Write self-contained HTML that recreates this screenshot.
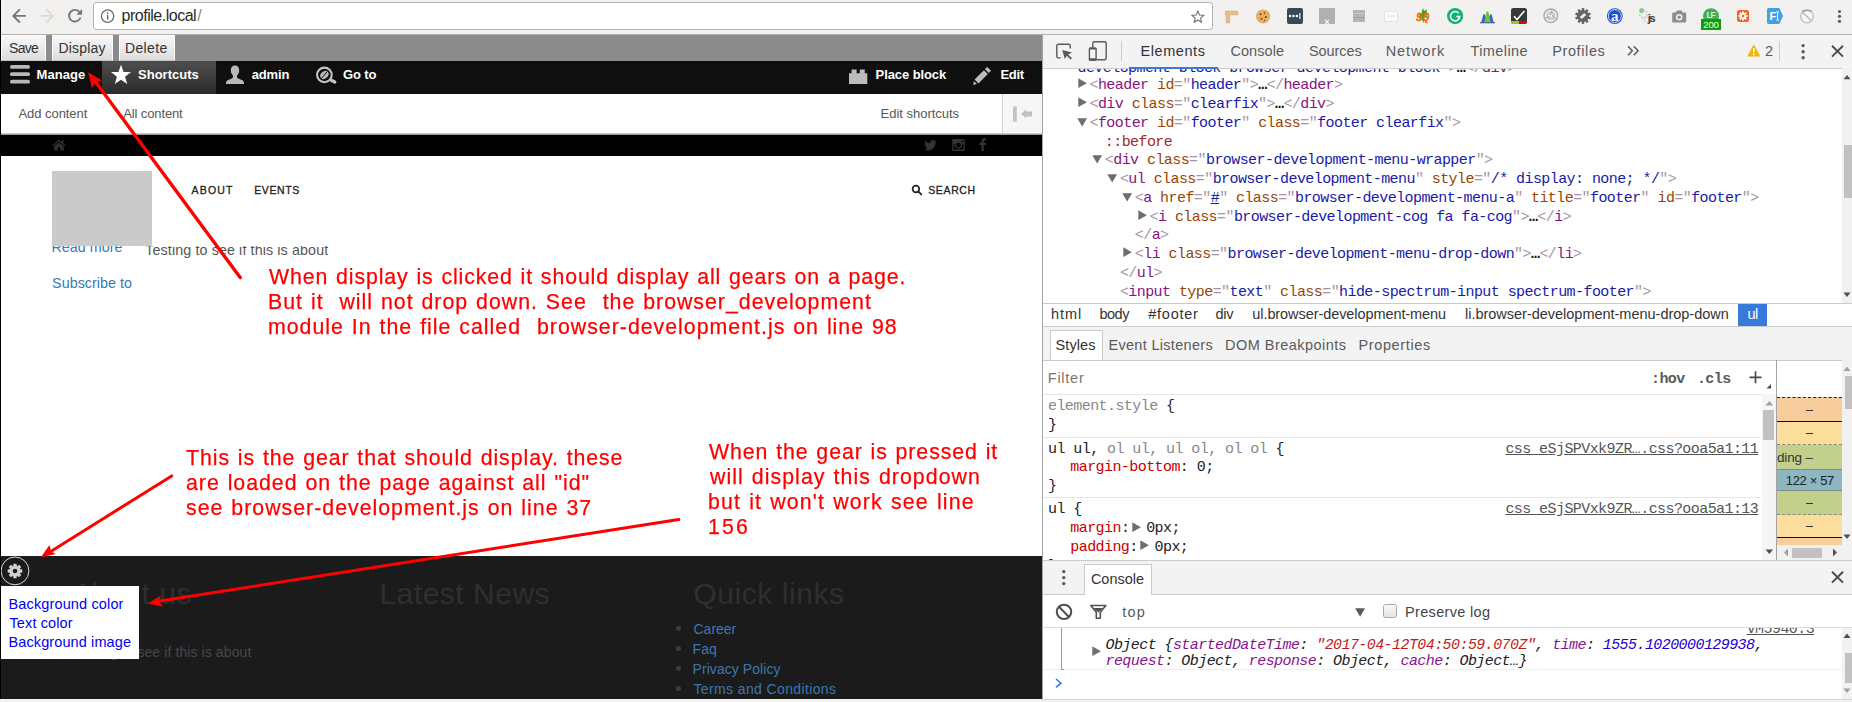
<!DOCTYPE html>
<html><head><meta charset="utf-8"><title>profile.local</title><style>
*{box-sizing:border-box;margin:0;padding:0}
html,body{width:1852px;height:702px;overflow:hidden;background:#f2f1f0;font-family:"Liberation Sans",sans-serif}
.t{position:absolute;white-space:pre;font-family:"Liberation Sans",sans-serif}
.a{position:absolute}
.m{position:absolute;white-space:pre;font-family:"Liberation Mono",monospace;font-size:15px;line-height:19px;letter-spacing:-0.574px}
.tg{color:#881280}.an{color:#994500}.av{color:#1a1aa6}.pu{color:#a894a6}
svg{position:absolute;overflow:visible}
</style></head><body>
<div class="a" style="left:0px;top:0px;width:1852px;height:35px;background:#f2f1f0;"></div>
<div class="a" style="left:0px;top:34px;width:1852px;height:1px;background:#b3b2b0;"></div>
<svg style="left:0;top:0" width="100" height="35"><g fill="none" stroke-linecap="butt" stroke-linejoin="miter"><path d="M25.900 15.900H13.600M19.900 9.300L13.300 15.900L19.900 22.500" stroke="#767676" stroke-width="1.900"/><path d="M40 15.900H52.500M46.200 9.300L52.800 15.900L46.200 22.500" stroke="#dcdbd9" stroke-width="1.900"/><path d="M79.700 12.300A5.850 5.850 0 1 0 80.500 17.500" stroke="#767676" stroke-width="1.900"/><path d="M82.100 9.100V14.700H76.300Z" fill="#767676" stroke="none"/></g></svg>
<div class="a" style="left:93px;top:2px;width:1120px;height:28px;background:#fff;border:1px solid #b3b1ae;border-radius:3.500px"></div>
<svg style="left:100px;top:8px" width="16" height="16"><circle cx="7.6" cy="8.1" r="6.2" fill="none" stroke="#6a6a6a" stroke-width="1.3"/><rect x="6.9" y="7" width="1.5" height="4.6" fill="#6a6a6a"/><rect x="6.9" y="4.4" width="1.5" height="1.6" fill="#6a6a6a"/></svg>
<svg style="left:1191.2px;top:9.9px" width="13.8" height="13.4" viewBox="0 0 16 16"><path d="M8 1.3l2 4.6 5 .45-3.8 3.3 1.15 4.9L8 11.9l-4.35 2.65 1.15-4.9L1 6.35l5-.45z" fill="none" stroke="#6a6a6a" stroke-width="1.25" stroke-linejoin="miter"/></svg>
<svg style="left:1224px;top:9px" width="16" height="16"><path d="M1.5 2.2h12.3v3.5H5.6v8H2.2V5.7H1.5z" fill="#e9bb8d" stroke="#d29c66" stroke-width=".6"/><path d="M2.2 2.6l1.4-1.2v1.2z" fill="#d29c66"/></svg>
<svg style="left:1255px;top:9px" width="16" height="16"><circle cx="8.1" cy="7.4" r="7" fill="#e3a455"/><circle cx="8.1" cy="7.4" r="6.6" fill="#e8ae62"/><g fill="#5b3a1c"><circle cx="5.5" cy="5.2" r=".9"/><circle cx="9.6" cy="4" r=".8"/><circle cx="10.8" cy="8" r=".9"/><circle cx="6.5" cy="9.8" r=".9"/><circle cx="9.5" cy="11.4" r=".7"/></g></svg>
<div class="a" style="left:1287px;top:8px;width:16px;height:16px;background:#3a4a55;border-radius:2px"></div>
<svg style="left:1287px;top:8px" width="16" height="16"><g fill="#fff"><circle cx="3.1" cy="8" r="1.25"/><circle cx="6.5" cy="8" r="1.25"/><circle cx="9.9" cy="8" r="1.25"/><rect x="12.3" y="5" width="1.1" height="6"/></g></svg>
<div class="a" style="left:1319px;top:8px;width:16px;height:16px;background:#b1b1b1"></div>
<svg style="left:1319px;top:8px" width="16" height="16"><path d="M6.2 11.8l3.6 4M9.8 11.8l-3.6 4" stroke="#fff" stroke-width="1.1"/></svg>
<div class="a" style="left:1353px;top:10px;width:12px;height:12px;background:#b4b4b4"></div>
<div class="a" style="left:1354px;top:13px;width:10px;height:1px;background:#c9c9c9"></div><div class="a" style="left:1354px;top:17px;width:10px;height:1px;background:#9f9f9f"></div>
<div class="a" style="left:1384px;top:10.5px;width:14px;height:11px;background:#fcfcfc;border:1px solid #e4e4e4;border-radius:1px"></div>
<div class="a" style="left:1387px;top:15px;width:8px;height:2px;background:#ececec"></div>
<svg style="left:1415px;top:7px" width="18" height="18"><path d="M8 1l1.2 3 3-1.6-.8 3.2 3 .9-3 1.5 1.6 3-3.2-.8L8.7 16l-1.5-3.6-3 1.6.8-3.2-3.3-.8 3-1.6-1.6-3 3.3.8z" fill="#3aa528"/></svg>
<svg style="left:1447px;top:7.7px" width="17" height="17"><circle cx="8.1" cy="8.1" r="8.1" fill="#15b371"/><path d="M11.6 5.2A4.6 4.6 0 1 0 12.7 8.6H9.4" fill="none" stroke="#fff" stroke-width="1.5"/><path d="M12.9 8.3v3.2l-2.3-1.6z" fill="#fff"/></svg>
<svg style="left:1480px;top:10px" width="15" height="14"><path d="M0 13c2.600 0 2.200-9 4.200-9S5.800 13 8.400 13z" fill="#3b62c8"/><path d="M6.600 13c2.600 0 2.200-9 4.200-9S12.400 13 15 13z" fill="#3b62c8"/><path d="M2.800 13c3 0 2.600-12 4.700-12S9.200 13 12.200 13z" fill="#79c22c"/><rect x="0" y="12.200" width="15" height="1.100" fill="#3b62c8"/></svg>
<div class="a" style="left:1511px;top:7.8px;width:16.2px;height:16px;background:#383838;border-radius:2.5px;overflow:hidden"><div class="a" style="left:0;top:13.4px;width:8.2px;height:3px;background:#97c91f"></div><div class="a" style="left:8.2px;top:13.4px;width:8.2px;height:3px;background:#c80f0f"></div></div>
<svg style="left:1511px;top:7.8px" width="17" height="16"><path d="M3 8.2l3 3.3 7.4-8.6" fill="none" stroke="#fff" stroke-width="1.6"/></svg>
<svg style="left:1543px;top:8px" width="16" height="16"><circle cx="7.800" cy="7.700" r="6.800" fill="none" stroke="#adadad" stroke-width="1.500"/><circle cx="7.800" cy="7.700" r="3.500" fill="none" stroke="#b4b4b4" stroke-width="1.300"/><path d="M7.800 .8c2.200 2 1.200 5.200-1.500 6.200M14.300 10.500c-2.800.8-5.100-1.300-4.700-4M2.200 11.900c.5-2.800 3.700-3.700 6-2" fill="none" stroke="#b4b4b4" stroke-width="1.300"/></svg>
<svg style="left:1575px;top:8px" width="16" height="16" viewBox="-8 -8 16 16"><g fill="#636363"><circle r="6"/><g id="gt"><rect x="-1.200" y="-7.900" width="2.400" height="3"/></g><use href="#gt" transform="rotate(36)"/><use href="#gt" transform="rotate(72)"/><use href="#gt" transform="rotate(108)"/><use href="#gt" transform="rotate(144)"/><use href="#gt" transform="rotate(180)"/><use href="#gt" transform="rotate(216)"/><use href="#gt" transform="rotate(252)"/><use href="#gt" transform="rotate(288)"/><use href="#gt" transform="rotate(324)"/></g><rect x="-3" y="-1.500" width="6" height="3" fill="#f2f1f0" transform="rotate(-42)"/></svg>
<svg style="left:1607px;top:7.7px" width="16" height="17"><circle cx="7.8" cy="8.1" r="7.9" fill="#1b50cf"/><circle cx="7.8" cy="8.1" r="6.5" fill="none" stroke="#dfe8fb" stroke-width=".9"/></svg>
<svg style="left:1638px;top:7px" width="18" height="18"><circle cx="5.6" cy="7.2" r="3.6" fill="none" stroke="#d4d4d4" stroke-width="2.4" stroke-dasharray="1.9 1.2"/><circle cx="8.6" cy="12.6" r="2.6" fill="none" stroke="#d9d9d9" stroke-width="2" stroke-dasharray="1.6 1.1"/><circle cx="3.6" cy="3.6" r="2.3" fill="#62c462"/><circle cx="3.6" cy="3.6" r="1" fill="#a6e3a6"/></svg>
<svg style="left:1672px;top:10px" width="15" height="13"><path d="M1.2 2.6h2.6L4.9.6h4.6l1.1 2h2.6a1 1 0 0 1 1 1v8a1 1 0 0 1-1 1h-12a1 1 0 0 1-1-1v-8a1 1 0 0 1 1-1z" fill="#8c8c8c"/><circle cx="7.2" cy="7.3" r="3.3" fill="#f2f1f0"/><circle cx="7.2" cy="7.3" r="1.7" fill="#8c8c8c"/></svg>
<svg style="left:1703px;top:8px" width="17" height="17"><circle cx="8" cy="8.2" r="8" fill="#3bb054"/></svg>
<div class="a" style="left:1700.8px;top:18.8px;width:20.3px;height:11.2px;background:#0d9d0d"></div>
<div class="a" style="left:1737.2px;top:10px;width:12px;height:12px;background:#f4621f;border-radius:2.5px"></div>
<svg style="left:1737.2px;top:10px" width="12" height="12" viewBox="-6 -6 12 12"><g fill="#fff"><circle r="3"/><g id="og"><rect x="-.9" y="-4.6" width="1.8" height="2.4"/></g><use href="#og" transform="rotate(45)"/><use href="#og" transform="rotate(90)"/><use href="#og" transform="rotate(135)"/><use href="#og" transform="rotate(180)"/><use href="#og" transform="rotate(225)"/><use href="#og" transform="rotate(270)"/><use href="#og" transform="rotate(315)"/></g><circle r="1.3" fill="#f4621f"/></svg>
<svg style="left:1766.9px;top:7.8px" width="17" height="16"><path d="M1.8 0h10.4L16.1 8 12.2 16H1.8A1.8 1.8 0 0 1 0 14.2V1.8A1.8 1.8 0 0 1 1.8 0z" fill="#41a0e2"/><path d="M9.3 3.6c.9 0 1.2.3 1.2.9v7c0 .6-.3.9-1.2.9M12 3.6c-.9 0-1.2.3-1.2.9M12 12.4c-.9 0-1.2-.3-1.2-.9" fill="none" stroke="#fff" stroke-width="1"/></svg>
<svg style="left:1800px;top:9px" width="15" height="15"><circle cx="7" cy="7.6" r="6.3" fill="#f6f6f6" stroke="#bdbdbd" stroke-width="1.3"/><path d="M2.6 3.2l8.9 8.8" stroke="#b5b5b5" stroke-width="1.3"/><path d="M2 2.4a7 3 0 0 1 10 0" fill="none" stroke="#9d9d9d" stroke-width="1.4"/></svg>
<svg style="left:1836px;top:8px" width="8" height="18"><g fill="#5c5c5c"><circle cx="3.5" cy="3.5" r="1.6"/><circle cx="3.5" cy="8.3" r="1.6"/><circle cx="3.5" cy="13.3" r="1.6"/></g></svg>
<div class="a" style="left:0px;top:35px;width:1042px;height:664px;background:#fff;"></div>
<div class="a" style="left:0px;top:35px;width:1042px;height:26px;background:#8c8c8c;"></div>
<div class="a" style="left:1px;top:35px;width:45px;height:25.5px;background:linear-gradient(#f7f7f7,#ececec 45%,#dcdcdc);border:1px solid #fdfdfd;border-bottom-color:#c4c4c4;border-radius:1px"></div>
<div class="a" style="left:52px;top:35px;width:61px;height:25.5px;background:linear-gradient(#f7f7f7,#ececec 45%,#dcdcdc);border:1px solid #fdfdfd;border-bottom-color:#c4c4c4;border-radius:1px"></div>
<div class="a" style="left:119px;top:35px;width:55.8px;height:25.5px;background:linear-gradient(#f7f7f7,#ececec 45%,#dcdcdc);border:1px solid #fdfdfd;border-bottom-color:#c4c4c4;border-radius:1px"></div>
<div class="a" style="left:0px;top:61px;width:1042px;height:33px;background:#0f0f0f;"></div>
<div class="a" style="left:102px;top:61px;width:114px;height:33px;background:linear-gradient(#4b4b4b 10%,#2a2a2a 100%)"></div>
<svg style="left:10px;top:64px" width="21" height="21"><g fill="#b9b9b9"><rect x="0" y="1" width="20" height="3.8" rx="1.9"/><rect x="0" y="8.3" width="20" height="3.8" rx="1.9"/><rect x="0" y="15.8" width="20" height="3.8" rx="1.9"/></g></svg>
<svg style="left:111px;top:64px" width="20" height="21" viewBox="0 0 20 21"><path d="M10 .7l2.55 7.2 7.45.15-5.95 4.6 2.2 7.35L10 15.7 3.75 20l2.2-7.35L0 8.05l7.45-.15z" fill="#fff"/></svg>
<svg style="left:225px;top:64.5px" width="20" height="20" viewBox="0 0 20 20"><path d="M10 .5c2.6 0 4.2 2 4.2 4.8 0 2.2-.9 4.2-2.2 5.2v1.6c0 .6.4 1 1.2 1.3l3.6 1.5c1.4.6 2.2 1.7 2.2 3.1v.9H1v-.9c0-1.400.8-2.500 2.200-3.100l3.600-1.500c.8-.3 1.200-.7 1.200-1.300v-1.600C6.700 9.500 5.800 7.500 5.800 5.300 5.800 2.500 7.400.5 10 .5z" fill="#b9b9b9"/></svg>
<svg style="left:0;top:0" width="400" height="100"><circle cx="324.400" cy="74.900" r="7.300" fill="none" stroke="#c4c4c4" stroke-width="2.100"/><path d="M331.300 80.300l3.500 1.700" stroke="#c4c4c4" stroke-width="3.200" stroke-linecap="round"/><ellipse cx="324.400" cy="74.900" rx="4.600" ry="3.500" fill="#b9b9b9" transform="rotate(-42 324.400 74.900)"/><path d="M321.600 78.300l5.600-6.800" stroke="#0f0f0f" stroke-width="1"/></svg>
<svg style="left:849px;top:68.5px" width="19" height="15"><path d="M0 4.300h2.600V.4h5v3.900h3.200V.4h5v3.900h2.500v10.700H0z" fill="#bcbcbc"/></svg>
<svg style="left:973px;top:66px" width="20" height="19"><path d="M14.200.900l3.900 3.900-2.300 2.300-3.900-3.900zM10.900 4.200l3.900 3.900-9.300 9.300-3.900-3.900zM.9 15.100l3 3L.2 18.900z" fill="#bcbcbc"/></svg>
<div class="a" style="left:0px;top:94px;width:1042px;height:39px;background:#fff;"></div>
<div class="a" style="left:0px;top:133px;width:1042px;height:1px;background:#c9c9c9;"></div>
<div class="a" style="left:0px;top:134px;width:1042px;height:1px;background:#9b9b9b;"></div>
<div class="a" style="left:1002px;top:94px;width:40px;height:39px;background:#f6f6f6;border-left:1px solid #cfcfcf"></div>
<svg style="left:0;top:0" width="1042" height="130"><rect x="1013" y="106.400" width="3.800" height="15.300" fill="#c2c2c2"/><path d="M1020.900 113.900l5.300-4.400v1.900h5.800v5h-5.800v1.900z" fill="#c2c2c2"/></svg>
<div class="a" style="left:0px;top:135px;width:1042px;height:20.5px;background:#000;"></div>
<svg style="left:52px;top:139px" width="14" height="12" viewBox="0 0 14 12"><path d="M7 .6L.3 6.400l.7.800L7 2.200l6 5 .7-.8-2.200-1.900V1.300h-1.600v1.800zM2.200 7.300V11.400h3.600V8.200h2.400v3.200h3.600V7.300L7 3.400z" fill="#2d3338"/></svg>
<svg style="left:923.5px;top:139.500px" width="13" height="11" viewBox="0 0 13 11"><path d="M12.800 1.300c-.5.2-1 .4-1.500.4.500-.3.900-.800 1.100-1.400-.5.300-1 .5-1.600.6A2.600 2.600 0 0 0 6.300 3.300C4.200 3.200 2.300 2.200 1 .6c-.7 1.200-.3 2.700.8 3.500-.4 0-.8-.1-1.200-.3 0 1.300.9 2.400 2.100 2.600-.4.100-.8.100-1.200 0 .3 1 1.300 1.800 2.400 1.800A5.300 5.300 0 0 1 .1 9.300c1.200.7 2.500 1.200 4 1.200 4.800 0 7.400-4 7.400-7.400v-.3c.5-.4 1-.9 1.300-1.500z" fill="#333"/></svg>
<svg style="left:951.5px;top:139.300px" width="13" height="12" viewBox="0 0 13 12"><path d="M1.800 0h9.400A1.600 1.600 0 0 1 12.800 1.600v8.800A1.600 1.600 0 0 1 11.200 12H1.800A1.600 1.600 0 0 1 .2 10.400V1.600A1.600 1.600 0 0 1 1.800 0zM9.400 1.400v1.800h1.900V1.400zM1.600 5v5.200c0 .2.200.4.400.4h9c.2 0 .4-.2.400-.4V5h-1.200a3.800 3.800 0 1 1-7.400 0zM6.500 3.700a2.400 2.400 0 1 0 0 4.800 2.400 2.400 0 0 0 0-4.800z" fill="#333" fill-rule="evenodd"/></svg>
<svg style="left:978.300px;top:138.300px" width="9" height="13" viewBox="0 0 9 13"><path d="M8.100.1v2.100H6.900c-.9 0-1.100.4-1.100 1.100v1.500h2.300l-.3 2.300h-2v5.800H3.400V7.100h-2V4.800h2V3.100C3.400 1.100 4.600 0 6.400 0c.8 0 1.500.1 1.700.1z" fill="#333"/></svg>
<div class="a" style="left:52px;top:171px;width:100px;height:75px;background:#cacaca;"></div>
<svg style="left:0;top:0" width="1000" height="200"><circle cx="915.900" cy="189" r="3.300" fill="none" stroke="#222" stroke-width="1.700"/><path d="M918.500 191.700l2.700 2.700" stroke="#222" stroke-width="1.900" stroke-linecap="round"/></svg>
<div class="a" style="left:0px;top:556px;width:1042px;height:143px;background:#1b1b1b;"></div>
<div class="a" style="left:676.3px;top:626.3px;width:4.600px;height:4.600px;border-radius:50%;background:#3b3b3b"></div>
<div class="a" style="left:676.3px;top:646.3px;width:4.600px;height:4.600px;border-radius:50%;background:#3b3b3b"></div>
<div class="a" style="left:676.3px;top:666.3px;width:4.600px;height:4.600px;border-radius:50%;background:#3b3b3b"></div>
<div class="a" style="left:676.3px;top:686.3px;width:4.600px;height:4.600px;border-radius:50%;background:#3b3b3b"></div>
<svg style="left:0;top:556px" width="32" height="32"><circle cx="15" cy="14.900" r="13.900" fill="none" stroke="#d9d9d9" stroke-width="1"/></svg>
<svg style="left:7.200px;top:563.300px" width="16" height="16" viewBox="-8 -8 16 16"><g fill="#d2d2d2"><circle r="5.300"/><g id="pg"><path d="M-1.500 -7.300h3l.4 2.600h-3.800z"/></g><use href="#pg" transform="rotate(45)"/><use href="#pg" transform="rotate(90)"/><use href="#pg" transform="rotate(135)"/><use href="#pg" transform="rotate(180)"/><use href="#pg" transform="rotate(225)"/><use href="#pg" transform="rotate(270)"/><use href="#pg" transform="rotate(315)"/></g><circle r="2.300" fill="#1b1b1b"/></svg>
<div class="a" style="left:1.3px;top:586.2px;width:137.5px;height:72.5px;background:#fff;z-index:10;"></div>
<svg style="left:0;top:0;z-index:50" width="1042" height="702"><g stroke="#ff0000" stroke-width="3.4" stroke-linecap="round" fill="#ff0000"><path d="M240.2 277.6L96 82.500"/><path d="M88.200 72.200L102 80.400L95.500 82.200L91.900 87.900Z" stroke="none"/><path d="M171.700 475.900L52 550.700" stroke-width="3"/><path d="M40.700 557.400L49.500 545L51.200 551.600L55.800 554.100Z" stroke="none"/><path d="M678.800 519.500L160 601" stroke-width="3"/><path d="M147.900 603.500L161 595.400L159 601L162.900 606.700Z" stroke="none"/></g></svg>
<div class="a" style="left:0px;top:0px;width:1px;height:699px;background:#000;z-index:60;"></div>
<div class="a" style="left:1042px;top:35px;width:1px;height:664px;background:#a3a3a3;"></div>
<div class="a" style="left:1043px;top:35px;width:809px;height:664px;background:#fff;"></div>
<div class="a" style="left:1043px;top:35px;width:809px;height:33px;background:#f3f3f3;"></div>
<div class="a" style="left:1043px;top:68px;width:809px;height:1px;background:#cbcbcb;"></div>
<svg style="left:0;top:0" width="1200" height="70"><g fill="none" stroke="#5a5a5a" stroke-width="1.400"><path d="M1060.800 57.900H1058.500a1.700 1.700 0 0 1-1.700-1.700V45.900a1.700 1.700 0 0 1 1.700-1.700H1068.600a1.700 1.700 0 0 1 1.700 1.700V48.400"/><path d="M1092.800 47.400V43.300a1.500 1.500 0 0 1 1.500-1.500H1104.700a1.500 1.500 0 0 1 1.500 1.500V58.300a1.500 1.500 0 0 1-1.500 1.500H1096.700"/><rect x="1089.400" y="48.100" width="6.700" height="12" rx="1.200"/></g><g fill="#5a5a5a"><path d="M1062.200 50.100L1071.900 52.500L1068.200 54.400L1072 58.200L1070.600 59.500L1066.800 55.700L1064.800 58.900Z"/><rect x="1088.900" y="47.500" width="7.700" height="2.100" rx=".8"/><rect x="1088.900" y="58.200" width="7.700" height="2.500" rx=".8"/></g></svg>
<div class="a" style="left:1121px;top:41px;width:1px;height:20px;background:#cdcdcd;"></div>
<svg style="left:1627px;top:45px" width="14" height="12"><path d="M1 1.300l4.300 4.500L1 10.300M6.800 1.300l4.300 4.500-4.300 4.500" fill="none" stroke="#5a5a5a" stroke-width="1.500"/></svg>
<svg style="left:1746.500px;top:43.500px" width="14" height="13"><path d="M6.800.3l6.600 12.200H.2z" fill="#f3b700"/><rect x="6" y="4.200" width="1.600" height="4.300" fill="#fff"/><rect x="6" y="9.600" width="1.600" height="1.600" fill="#fff"/></svg>
<div class="a" style="left:1779px;top:41px;width:1px;height:20px;background:#cfcfcf;"></div>
<svg style="left:1800px;top:43px" width="8" height="18"><g fill="#5a5a5a"><circle cx="3.100" cy="2.600" r="1.700"/><circle cx="3.100" cy="8.700" r="1.700"/><circle cx="3.100" cy="14.700" r="1.700"/></g></svg>
<svg style="left:1831px;top:45px" width="14" height="13"><path d="M1 .8l11 10.800M12 .8L1 11.600" stroke="#4a4a4a" stroke-width="1.900"/></svg>
<div class="a" style="left:1129px;top:67px;width:89px;height:2px;background:#3879d9;z-index:5;"></div>
<div class="a" id="domtree" style="left:1043px;top:69px;width:799px;height:233.500px;overflow:hidden">
<div class="m" style="left:34.50px;top:-10.00px;"><span class="av">development-block browser-development-block</span><span class="pu">"&gt;</span><span style="color:#111;font-weight:700">…</span><span class="pu">&lt;/</span><span class="tg">div</span><span class="pu">&gt;</span></div>
<div class="m" style="left:46.50px;top:7.00px;"><span class="pu">&lt;</span><span class="tg">header</span> <span class="an">id</span><span class="pu">="</span><span class="av">header</span><span class="pu">"</span><span class="pu">&gt;</span><span style="color:#111;font-weight:700">…</span><span class="pu">&lt;/</span><span class="tg">header</span><span class="pu">&gt;</span></div>
<svg style="left:35.10px;top:9.30px" width="10" height="11"><path d="M.3.300L8.900 5.200.3 10.100z" fill="#6e6e6e"/></svg>
<div class="m" style="left:46.50px;top:26.00px;"><span class="pu">&lt;</span><span class="tg">div</span> <span class="an">class</span><span class="pu">="</span><span class="av">clearfix</span><span class="pu">"</span><span class="pu">&gt;</span><span style="color:#111;font-weight:700">…</span><span class="pu">&lt;/</span><span class="tg">div</span><span class="pu">&gt;</span></div>
<svg style="left:35.10px;top:28.30px" width="10" height="11"><path d="M.3.300L8.900 5.200.3 10.100z" fill="#6e6e6e"/></svg>
<div class="m" style="left:46.50px;top:45.00px;"><span class="pu">&lt;</span><span class="tg">footer</span> <span class="an">id</span><span class="pu">="</span><span class="av">footer</span><span class="pu">"</span> <span class="an">class</span><span class="pu">="</span><span class="av">footer clearfix</span><span class="pu">"</span><span class="pu">&gt;</span></div>
<svg style="left:33.70px;top:48.60px" width="11" height="10"><path d="M.3.300H10.100L5.200 8.400z" fill="#6e6e6e"/></svg>
<div class="m" style="left:61.80px;top:64.00px;"><span style="color:#a52a1a">::before</span></div>
<div class="m" style="left:61.80px;top:82.00px;"><span class="pu">&lt;</span><span class="tg">div</span> <span class="an">class</span><span class="pu">="</span><span class="av">browser-development-menu-wrapper</span><span class="pu">"</span><span class="pu">&gt;</span></div>
<svg style="left:49.00px;top:85.60px" width="11" height="10"><path d="M.3.300H10.100L5.200 8.400z" fill="#6e6e6e"/></svg>
<div class="m" style="left:76.90px;top:101.00px;"><span class="pu">&lt;</span><span class="tg">ul</span> <span class="an">class</span><span class="pu">="</span><span class="av">browser-development-menu</span><span class="pu">"</span> <span class="an">style</span><span class="pu">="</span><span class="av">/* display: none; */</span><span class="pu">"</span><span class="pu">&gt;</span></div>
<svg style="left:64.10px;top:104.60px" width="11" height="10"><path d="M.3.300H10.100L5.200 8.400z" fill="#6e6e6e"/></svg>
<div class="m" style="left:91.80px;top:120.00px;"><span class="pu">&lt;</span><span class="tg">a</span> <span class="an">href</span><span class="pu">="</span><span class="av" style="text-decoration:underline;color:#1a1aa6">#</span><span class="pu">"</span> <span class="an">class</span><span class="pu">="</span><span class="av">browser-development-menu-a</span><span class="pu">"</span> <span class="an">title</span><span class="pu">="</span><span class="av">footer</span><span class="pu">"</span> <span class="an">id</span><span class="pu">="</span><span class="av">footer</span><span class="pu">"</span><span class="pu">&gt;</span></div>
<svg style="left:79.00px;top:123.60px" width="11" height="10"><path d="M.3.300H10.100L5.200 8.400z" fill="#6e6e6e"/></svg>
<div class="m" style="left:106.60px;top:139.00px;"><span class="pu">&lt;</span><span class="tg">i</span> <span class="an">class</span><span class="pu">="</span><span class="av">browser-development-cog fa fa-cog</span><span class="pu">"</span><span class="pu">&gt;</span><span style="color:#111;font-weight:700">…</span><span class="pu">&lt;/</span><span class="tg">i</span><span class="pu">&gt;</span></div>
<svg style="left:95.20px;top:141.30px" width="10" height="11"><path d="M.3.300L8.900 5.200.3 10.100z" fill="#6e6e6e"/></svg>
<div class="m" style="left:91.80px;top:157.00px;"><span class="pu">&lt;/</span><span class="tg">a</span><span class="pu">&gt;</span></div>
<div class="m" style="left:91.80px;top:176.00px;"><span class="pu">&lt;</span><span class="tg">li</span> <span class="an">class</span><span class="pu">="</span><span class="av">browser-development-menu-drop-down</span><span class="pu">"</span><span class="pu">&gt;</span><span style="color:#111;font-weight:700">…</span><span class="pu">&lt;/</span><span class="tg">li</span><span class="pu">&gt;</span></div>
<svg style="left:80.40px;top:178.30px" width="10" height="11"><path d="M.3.300L8.900 5.200.3 10.100z" fill="#6e6e6e"/></svg>
<div class="m" style="left:76.90px;top:195.00px;"><span class="pu">&lt;/</span><span class="tg">ul</span><span class="pu">&gt;</span></div>
<div class="m" style="left:76.90px;top:214.00px;"><span class="pu">&lt;</span><span class="tg">input</span> <span class="an">type</span><span class="pu">="</span><span class="av">text</span><span class="pu">"</span> <span class="an">class</span><span class="pu">="</span><span class="av">hide-spectrum-input spectrum-footer</span><span class="pu">"</span><span class="pu">&gt;</span></div>
</div>
<div class="a" style="left:1842px;top:68px;width:10px;height:235px;background:#f1f1f1;"></div>
<div class="a" style="left:1844px;top:145.3px;width:8px;height:53.2px;background:#c1c1c1;"></div>
<svg style="left:1842px;top:68px" width="10" height="235"><path d="M1.500 11.300h7L5 7z" fill="#505050"/><path d="M1.500 224.500h7L5 229z" fill="#505050"/></svg>
<div class="a" style="left:1043px;top:302.5px;width:809px;height:1px;background:#cbcbcb;"></div>
<div class="a" style="left:1043px;top:326px;width:809px;height:1px;background:#cbcbcb;"></div>
<div class="a" style="left:1738px;top:304px;width:28.8px;height:21.5px;background:#3879d9;"></div>
<div class="a" style="left:1043px;top:327px;width:809px;height:33px;background:#f3f3f3;"></div>
<div class="a" style="left:1043px;top:359.5px;width:809px;height:1px;background:#cbcbcb;"></div>
<div class="a" style="left:1049.500px;top:330.400px;width:53.200px;height:30.100px;background:#fff;border:1px solid #cbcbcb;border-bottom:none"></div>
<div class="a" style="left:1043px;top:393.5px;width:733px;height:1px;background:#e6e6e6;"></div>
<svg style="left:1749px;top:371px" width="24" height="19"><path d="M6.500 .3v12M.5 6.300h12" stroke="#4a4a4a" stroke-width="1.700" fill="none"/><path d="M22 13v4.500h-4.500z" fill="#4a4a4a"/></svg>
<div class="a" id="styles" style="left:1043px;top:394px;width:718px;height:166px;overflow:hidden">
<div class="m" style="left:5.00px;top:3.00px;"><span style="color:#888">element.style </span><span style="color:#222">{</span></div>
<div class="m" style="left:5.00px;top:22.00px;"><span style="color:#222">}</span></div>
<div class="a" style="left:0;top:43.19999999999999px;width:718px;height:1px;background:#e6e6e6"></div>
<div class="m" style="left:5.00px;top:46.00px;"><span style="color:#222">ul ul,</span><span style="color:#888"> ol ul, ul ol, ol ol </span><span style="color:#222">{</span></div>
<div class="m" style="left:27.30px;top:64.00px;"><span style="color:#c80000">margin-bottom</span><span style="color:#222">: 0;</span></div>
<div class="m" style="left:5.00px;top:83.00px;"><span style="color:#222">}</span></div>
<div class="a" style="left:0;top:103.10000000000002px;width:718px;height:1px;background:#e6e6e6"></div>
<div class="m" style="left:5.00px;top:106.00px;"><span style="color:#222">ul {</span></div>
<div class="m" style="left:27.30px;top:125.00px;"><span style="color:#c80000">margin</span><span style="color:#222">:  0px;</span></div>
<div class="m" style="left:27.30px;top:144.00px;"><span style="color:#c80000">padding</span><span style="color:#222">:  0px;</span></div>
<div class="m" style="left:5.00px;top:163.00px;"><span style="color:#222">}</span></div>
<svg style="left:88.5px;top:127.70000000000005px" width="10" height="11"><path d="M.3.300L8.900 5.200.3 10.100z" fill="#6e6e6e"/></svg>
<svg style="left:97.29999999999995px;top:146.29999999999995px" width="10" height="11"><path d="M.3.300L8.900 5.200.3 10.100z" fill="#6e6e6e"/></svg>
<div class="m" style="left:462.40px;top:46.00px;text-decoration:underline;color:#555;"><span style="color:#555">css_eSjSPVxk9ZR….css?ooa5a1:11</span></div>
<div class="m" style="left:462.40px;top:106.00px;text-decoration:underline;color:#555;"><span style="color:#555">css_eSjSPVxk9ZR….css?ooa5a1:13</span></div>
</div>
<div class="a" style="left:1761.5px;top:394px;width:14.5px;height:166px;background:#f5f5f5;"></div>
<div class="a" style="left:1763px;top:410px;width:10.8px;height:29.7px;background:#c1c1c1;"></div>
<svg style="left:1761.500px;top:394px" width="15" height="166"><path d="M3.500 11.500h7.600L7.300 7z" fill="#a0a0a0"/><path d="M3.500 155.500h7.600L7.300 160z" fill="#505050"/></svg>
<div class="a" style="left:1776px;top:360px;width:1px;height:200px;background:#a3a3a3;"></div>
<div class="a" style="left:1777px;top:397px;width:65.3px;height:24.5px;background:#f9cc9d;"></div>
<div class="a" style="left:1777px;top:396.500px;width:65.3px;height:0;border-top:1px dashed #222"></div>
<div class="a" style="left:1777px;top:421px;width:65.3px;height:1.2px;background:#111;"></div>
<div class="a" style="left:1777px;top:422px;width:65.3px;height:22.5px;background:#fddd9b;"></div>
<div class="a" style="left:1777px;top:444px;width:65.3px;height:0;border-top:1px dashed #8a8a7a"></div>
<div class="a" style="left:1777px;top:445px;width:65.3px;height:24px;background:#c3d08b;"></div>
<div class="a" style="left:1777px;top:468.5px;width:65.3px;height:22px;background:#8cb6c0;border-top:1px solid #7a8f8f;border-bottom:1px solid #7a8f8f;"></div>
<div class="a" style="left:1777px;top:490.5px;width:65.3px;height:24px;background:#c3d08b;"></div>
<div class="a" style="left:1777px;top:514px;width:65.3px;height:0;border-top:1px dashed #8a8a7a"></div>
<div class="a" style="left:1777px;top:515px;width:65.3px;height:22.5px;background:#fddd9b;"></div>
<div class="a" style="left:1777px;top:537px;width:65.3px;height:1.2px;background:#111;"></div>
<div class="a" style="left:1777px;top:538.2px;width:65.3px;height:6.8px;background:#f9cc9d;"></div>
<div class="a" style="left:1806px;top:410px;width:7px;height:1px;background:#333;"></div>
<div class="a" style="left:1806px;top:433px;width:7px;height:1px;background:#333;"></div>
<div class="a" style="left:1806px;top:503px;width:7px;height:1px;background:#333;"></div>
<div class="a" style="left:1806px;top:526px;width:7px;height:1px;background:#333;"></div>
<div class="a" style="left:1777px;top:545px;width:65.3px;height:15px;background:#f1f1f1;"></div>
<div class="a" style="left:1792px;top:547.5px;width:30px;height:10.5px;background:#c1c1c1;"></div>
<svg style="left:1777px;top:545px" width="66" height="15"><path d="M11 3.500v8L7 7.500z" fill="#a0a0a0"/><path d="M56 3.500v8l4-4z" fill="#505050"/></svg>
<div class="a" style="left:1842.3px;top:360px;width:9.7px;height:200px;background:#f1f1f1;"></div>
<div class="a" style="left:1844.8px;top:376.3px;width:7.2px;height:32.6px;background:#c1c1c1;"></div>
<svg style="left:1842px;top:360px" width="10" height="200"><path d="M1.500 11h7L5 6.500z" fill="#a0a0a0"/><path d="M1.500 174.500h7L5 179z" fill="#505050"/></svg>
<div class="a" style="left:1043px;top:560px;width:809px;height:1px;background:#cbcbcb;"></div>
<div class="a" style="left:1043px;top:561px;width:809px;height:33.5px;background:#f3f3f3;"></div>
<div class="a" style="left:1043px;top:594px;width:809px;height:1px;background:#cbcbcb;"></div>
<svg style="left:1060px;top:568px" width="8" height="20"><g fill="#5a5a5a"><circle cx="3.800" cy="3.600" r="1.700"/><circle cx="3.800" cy="9.600" r="1.700"/><circle cx="3.800" cy="15.600" r="1.700"/></g></svg>
<div class="a" style="left:1084.400px;top:564px;width:67.200px;height:31px;background:#fff;border:1px solid #cbcbcb;border-bottom:none"></div>
<svg style="left:1831px;top:571px" width="14" height="13"><path d="M1 .8l11 10.800M12 .8L1 11.600" stroke="#4a4a4a" stroke-width="1.900"/></svg>
<div class="a" style="left:1043px;top:627px;width:809px;height:1px;background:#dcdcdc;"></div>
<svg style="left:1055px;top:603px" width="18" height="18"><circle cx="9" cy="8.900" r="7.200" fill="none" stroke="#4f4f4f" stroke-width="2"/><path d="M4 3.800l10 10.200" stroke="#4f4f4f" stroke-width="2"/></svg>
<svg style="left:1089px;top:604px" width="19" height="16"><path d="M1.800 1.500H16.800L11.300 8.200V14.200H7.300V8.200z" fill="none" stroke="#4f4f4f" stroke-width="1.600" stroke-linejoin="round"/><path d="M4.500 4l4.800 4.500 4.800-4.500z" fill="#4f4f4f"/></svg>
<svg style="left:1355px;top:607.500px" width="11" height="9"><path d="M.2.200H10L5.100 8.700z" fill="#5a5a5a"/></svg>
<div class="a" style="left:1383px;top:604.200px;width:14px;height:14px;background:linear-gradient(#fafafa,#e4e4e4);border:1px solid #a9a9a9;border-radius:2.500px"></div>
<div class="a" id="cons" style="left:1043px;top:628px;width:799px;height:71px;overflow:hidden">
<div class="m" style="left:703.70px;top:-8.00px;text-decoration:underline;color:#555;"><span style="color:#555">VM5940:3</span></div>
<div class="m" style="left:62.50px;top:8.00px;font-style:italic;"><span style="color:#222">Object {</span><span style="color:#881391">startedDateTime</span><span style="color:#222">: </span><span style="color:#c41a16">"2017-04-12T04:50:59.070Z"</span><span style="color:#222">, </span><span style="color:#881391">time</span><span style="color:#222">: </span><span style="color:#1c00cf">1555.1020000129938</span><span style="color:#222">,</span></div>
<div class="m" style="left:62.50px;top:24.00px;font-style:italic;"><span style="color:#881391">request</span><span style="color:#222">: Object, </span><span style="color:#881391">response</span><span style="color:#222">: Object, </span><span style="color:#881391">cache</span><span style="color:#222">: Object…}</span></div>
<div class="a" style="left:0;top:41.39999999999998px;width:799px;height:1px;background:#f0f0f0"></div>
<div class="a" style="left:17.5px;top:0;width:1px;height:42px;background:#9a9a9a"></div><div class="a" style="left:17.5px;top:41px;width:3px;height:1px;background:#9a9a9a"></div>
<svg style="left:48.59999999999991px;top:17.799999999999955px" width="10" height="11"><path d="M.3.300L8.900 5.200.3 10.100z" fill="#6e6e6e"/></svg>
<svg style="left:12px;top:49.5px" width="9" height="11"><path d="M1 1l5 4.200L1 9.400" fill="none" stroke="#3b78e7" stroke-width="1.600"/></svg>
</div>
<div class="a" style="left:1842.3px;top:628px;width:9.7px;height:71px;background:#f1f1f1;"></div>
<div class="a" style="left:1844.8px;top:653px;width:7.2px;height:29.7px;background:#c1c1c1;"></div>
<svg style="left:1842px;top:628px" width="10" height="71"><path d="M1.500 10h7L5 5.500z" fill="#505050"/><path d="M1.500 60.500h7L5 65z" fill="#a0a0a0"/></svg>
<div class="a" style="left:0px;top:699px;width:1852px;height:3px;background:#f2f1f0;"></div>
<div class="a" style="left:1042px;top:699px;width:810px;height:1px;background:#d6d5d3;"></div>
<span class="t" style="left:121.50px;top:1.00px;font-size:16px;line-height:30px;color:#2b2b2b;letter-spacing:-0.481px;">profile.local</span>
<span class="t" style="left:197.20px;top:1.00px;font-size:16px;line-height:30px;color:#8a8a8a;">/</span>
<span class="t" style="left:1415.60px;top:1.60px;font-size:11.5px;line-height:30px;color:#ff6a00;font-weight:700;font-style:italic;transform:scaleX(0.8);transform-origin:0 0;-webkit-text-stroke:0.3px #ff6a00;">SQ</span>
<span class="t" style="left:1610.90px;top:0.60px;font-size:15px;line-height:30px;color:#fff;font-weight:700;font-family:'Liberation Serif',serif;">a</span>
<span class="t" style="left:1647.80px;top:2.60px;font-size:11.5px;line-height:30px;color:#3b3b3b;letter-spacing:-1.795px;font-weight:700;">js</span>
<span class="t" style="left:1706.60px;top:0.30px;font-size:8.5px;line-height:30px;color:#d9f0dd;letter-spacing:-1.192px;font-weight:700;">LF</span>
<span class="t" style="left:1703.20px;top:10.20px;font-size:9.6px;line-height:30px;color:#f4ffd6;letter-spacing:-0.136px;">200</span>
<span class="t" style="left:1769.60px;top:1.20px;font-size:11px;line-height:30px;color:#fff;font-weight:700;">F</span>
<span class="t" style="left:9.00px;top:33.00px;font-size:14px;line-height:30px;color:#333;letter-spacing:-0.708px;">Save</span>
<span class="t" style="left:58.40px;top:33.00px;font-size:14px;line-height:30px;color:#333;letter-spacing:0.216px;">Display</span>
<span class="t" style="left:125.00px;top:33.00px;font-size:14px;line-height:30px;color:#333;letter-spacing:0.363px;">Delete</span>
<span class="t" style="left:36.50px;top:60.00px;font-size:13px;line-height:30px;color:#fff;letter-spacing:0.066px;font-weight:700;">Manage</span>
<span class="t" style="left:138.00px;top:60.00px;font-size:13px;line-height:30px;color:#fff;letter-spacing:0.007px;font-weight:700;">Shortcuts</span>
<span class="t" style="left:251.75px;top:60.00px;font-size:13px;line-height:30px;color:#fff;letter-spacing:-0.148px;font-weight:700;">admin</span>
<span class="t" style="left:343.00px;top:60.00px;font-size:13px;line-height:30px;color:#fff;letter-spacing:-0.123px;font-weight:700;">Go to</span>
<span class="t" style="left:875.60px;top:60.00px;font-size:13px;line-height:30px;color:#fff;letter-spacing:-0.091px;font-weight:700;">Place block</span>
<span class="t" style="left:1000.40px;top:60.00px;font-size:13px;line-height:30px;color:#fff;letter-spacing:-0.308px;font-weight:700;">Edit</span>
<span class="t" style="left:18.50px;top:99.00px;font-size:13px;line-height:30px;color:#565656;letter-spacing:-0.057px;">Add content</span>
<span class="t" style="left:123.30px;top:99.00px;font-size:13px;line-height:30px;color:#565656;letter-spacing:-0.129px;">All content</span>
<span class="t" style="left:880.60px;top:99.00px;font-size:13px;line-height:30px;color:#565656;letter-spacing:-0.020px;">Edit shortcuts</span>
<span class="t" style="left:191.50px;top:175.00px;font-size:10.5px;line-height:30px;color:#222;letter-spacing:1.186px;-webkit-text-stroke:0.3px #222;">ABOUT</span>
<span class="t" style="left:254.25px;top:175.00px;font-size:10.5px;line-height:30px;color:#222;letter-spacing:0.599px;-webkit-text-stroke:0.3px #222;">EVENTS</span>
<span class="t" style="left:928.20px;top:175.00px;font-size:10.5px;line-height:30px;color:#222;letter-spacing:0.645px;-webkit-text-stroke:0.3px #222;">SEARCH</span>
<span class="t" style="left:51.50px;top:232.00px;font-size:14.3px;line-height:30px;color:#337ab7;letter-spacing:0.041px;clip-path:inset(14.00px 0 0 0);">Read more</span>
<span class="t" style="left:145.30px;top:235.00px;font-size:14.3px;line-height:30px;color:#555;letter-spacing:0.109px;clip-path:inset(11.00px 0 0 0);">Testing to see if this is about</span>
<span class="t" style="left:52.10px;top:268.00px;font-size:14.3px;line-height:30px;color:#337ab7;letter-spacing:0.044px;">Subscribe to</span>
<span class="t" style="left:72.70px;top:579.00px;font-size:30px;line-height:30px;color:#2f2f2f;letter-spacing:-1.193px;">Abou</span>
<span class="t" style="left:141.60px;top:579.00px;font-size:30px;line-height:30px;color:#2f2f2f;letter-spacing:0.515px;">t us</span>
<span class="t" style="left:379.40px;top:579.00px;font-size:30px;line-height:30px;color:#2f2f2f;letter-spacing:0.513px;">Latest News</span>
<span class="t" style="left:693.30px;top:579.00px;font-size:30px;line-height:30px;color:#2f2f2f;letter-spacing:0.567px;">Quick links</span>
<span class="t" style="left:72.50px;top:637.00px;font-size:14px;line-height:30px;color:#484848;letter-spacing:0.097px;">Testing to see if this is about</span>
<span class="t" style="left:693.50px;top:614.00px;font-size:14px;line-height:30px;color:#3a78b0;letter-spacing:-0.006px;">Career</span>
<span class="t" style="left:692.50px;top:634.00px;font-size:14px;line-height:30px;color:#3a78b0;letter-spacing:0.081px;">Faq</span>
<span class="t" style="left:692.50px;top:654.00px;font-size:14px;line-height:30px;color:#3a78b0;letter-spacing:0.067px;">Privacy Policy</span>
<span class="t" style="left:693.50px;top:674.00px;font-size:14px;line-height:30px;color:#3a78b0;letter-spacing:0.374px;">Terms and Conditions</span>
<span class="t" style="left:8.50px;top:589.00px;font-size:14.5px;line-height:30px;color:#0000ee;letter-spacing:0.139px;z-index:11;">Background color</span>
<span class="t" style="left:9.50px;top:608.00px;font-size:14.5px;line-height:30px;color:#0000ee;letter-spacing:0.109px;z-index:11;">Text color</span>
<span class="t" style="left:8.50px;top:627.00px;font-size:14.5px;line-height:30px;color:#0000ee;letter-spacing:0.104px;z-index:11;">Background image</span>
<span class="t" style="left:269.00px;top:262.00px;font-size:21.3px;line-height:30px;color:#ff0000;letter-spacing:0.897px;word-spacing:1.0px;will-change:transform;-webkit-text-stroke:0.25px #ff0000;">When display is clicked it should display all gears on a page.</span>
<span class="t" style="left:268.00px;top:287.00px;font-size:21.3px;line-height:30px;color:#ff0000;letter-spacing:1.007px;word-spacing:1.0px;will-change:transform;-webkit-text-stroke:0.25px #ff0000;">But it  will not drop down. See  the browser_development</span>
<span class="t" style="left:268.00px;top:312.00px;font-size:21.3px;line-height:30px;color:#ff0000;letter-spacing:1.013px;word-spacing:1.0px;will-change:transform;-webkit-text-stroke:0.25px #ff0000;">module In the file called  browser-development.js on line 98</span>
<span class="t" style="left:185.50px;top:443.00px;font-size:21.3px;line-height:30px;color:#ff0000;letter-spacing:0.933px;word-spacing:1.0px;will-change:transform;-webkit-text-stroke:0.25px #ff0000;">This is the gear that should display. these</span>
<span class="t" style="left:185.50px;top:468.00px;font-size:21.3px;line-height:30px;color:#ff0000;letter-spacing:0.988px;word-spacing:1.0px;will-change:transform;-webkit-text-stroke:0.25px #ff0000;">are loaded on the page against all "id"</span>
<span class="t" style="left:185.50px;top:493.00px;font-size:21.3px;line-height:30px;color:#ff0000;letter-spacing:1.015px;word-spacing:1.0px;will-change:transform;-webkit-text-stroke:0.25px #ff0000;">see browser-development.js on line 37</span>
<span class="t" style="left:708.50px;top:437.00px;font-size:21.3px;line-height:30px;color:#ff0000;letter-spacing:0.922px;word-spacing:1.0px;will-change:transform;-webkit-text-stroke:0.25px #ff0000;">When the gear is pressed it</span>
<span class="t" style="left:709.50px;top:462.00px;font-size:21.3px;line-height:30px;color:#ff0000;letter-spacing:1.062px;word-spacing:1.0px;will-change:transform;-webkit-text-stroke:0.25px #ff0000;">will display this dropdown</span>
<span class="t" style="left:707.50px;top:487.00px;font-size:21.3px;line-height:30px;color:#ff0000;letter-spacing:1.168px;word-spacing:1.0px;will-change:transform;-webkit-text-stroke:0.25px #ff0000;">but it won't work see line</span>
<span class="t" style="left:707.50px;top:512.00px;font-size:21.3px;line-height:30px;color:#ff0000;letter-spacing:2.206px;word-spacing:1.0px;will-change:transform;-webkit-text-stroke:0.25px #ff0000;">156</span>
<span class="t" style="left:1140.50px;top:36.00px;font-size:14.5px;line-height:30px;color:#333;letter-spacing:0.572px;">Elements</span>
<span class="t" style="left:1230.50px;top:36.00px;font-size:14.5px;line-height:30px;color:#5a5a5a;letter-spacing:0.044px;">Console</span>
<span class="t" style="left:1309.00px;top:36.00px;font-size:14.5px;line-height:30px;color:#5a5a5a;letter-spacing:-0.090px;">Sources</span>
<span class="t" style="left:1385.70px;top:36.00px;font-size:14.5px;line-height:30px;color:#5a5a5a;letter-spacing:0.879px;">Network</span>
<span class="t" style="left:1470.50px;top:36.00px;font-size:14.5px;line-height:30px;color:#5a5a5a;letter-spacing:0.416px;">Timeline</span>
<span class="t" style="left:1552.20px;top:36.00px;font-size:14.5px;line-height:30px;color:#5a5a5a;letter-spacing:0.614px;">Profiles</span>
<span class="t" style="left:1765.00px;top:36.00px;font-size:14.5px;line-height:30px;color:#5a5a5a;">2</span>
<span class="t" style="left:1051.00px;top:299.00px;font-size:14.5px;line-height:30px;color:#333;letter-spacing:0.910px;">html</span>
<span class="t" style="left:1099.40px;top:299.00px;font-size:14.5px;line-height:30px;color:#333;letter-spacing:-0.464px;">body</span>
<span class="t" style="left:1148.30px;top:299.00px;font-size:14.5px;line-height:30px;color:#333;letter-spacing:0.731px;">#footer</span>
<span class="t" style="left:1215.50px;top:299.00px;font-size:14.5px;line-height:30px;color:#333;letter-spacing:-0.243px;">div</span>
<span class="t" style="left:1252.30px;top:299.00px;font-size:14.5px;line-height:30px;color:#333;letter-spacing:-0.076px;">ul.browser-development-menu</span>
<span class="t" style="left:1465.00px;top:299.00px;font-size:14.5px;line-height:30px;color:#333;letter-spacing:-0.016px;">li.browser-development-menu-drop-down</span>
<span class="t" style="left:1747.50px;top:299.00px;font-size:14.5px;line-height:30px;color:#fff;letter-spacing:-0.564px;">ul</span>
<span class="t" style="left:1055.50px;top:330.00px;font-size:14.5px;line-height:30px;color:#333;letter-spacing:0.093px;">Styles</span>
<span class="t" style="left:1108.40px;top:330.00px;font-size:14.5px;line-height:30px;color:#5a5a5a;letter-spacing:0.315px;">Event Listeners</span>
<span class="t" style="left:1225.00px;top:330.00px;font-size:14.5px;line-height:30px;color:#5a5a5a;letter-spacing:0.473px;">DOM Breakpoints</span>
<span class="t" style="left:1358.40px;top:330.00px;font-size:14.5px;line-height:30px;color:#5a5a5a;letter-spacing:0.641px;">Properties</span>
<span class="t" style="left:1047.80px;top:363.00px;font-size:14.5px;line-height:30px;color:#777;letter-spacing:0.741px;">Filter</span>
<span class="t" style="left:1651.00px;top:365.00px;font-size:15px;line-height:30px;color:#5a5a5a;letter-spacing:-0.568px;font-weight:700;font-family:'Liberation Mono',monospace;">:hov</span>
<span class="t" style="left:1696.90px;top:365.00px;font-size:15px;line-height:30px;color:#5a5a5a;letter-spacing:-0.568px;font-weight:700;font-family:'Liberation Mono',monospace;">.cls</span>
<span class="t" style="left:1777.00px;top:442.50px;font-size:13.5px;line-height:30px;color:#333;letter-spacing:-0.175px;">ding –</span>
<span class="t" style="left:1785.80px;top:465.50px;font-size:13px;line-height:30px;color:#222;letter-spacing:-0.362px;">122 × 57</span>
<span class="t" style="left:1090.90px;top:564.00px;font-size:14.5px;line-height:30px;color:#333;letter-spacing:-0.006px;">Console</span>
<span class="t" style="left:1122.20px;top:597.00px;font-size:14.5px;line-height:30px;color:#5a5a5a;letter-spacing:1.254px;">top</span>
<span class="t" style="left:1405.00px;top:597.00px;font-size:14.5px;line-height:30px;color:#444;letter-spacing:0.333px;">Preserve log</span>
</body></html>
